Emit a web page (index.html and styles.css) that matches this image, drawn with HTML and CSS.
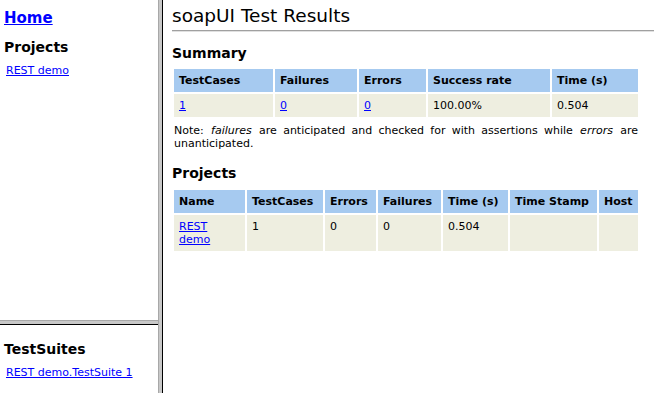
FILE: index.html
```html
<!DOCTYPE html>
<html lang="en">
<head>
    <meta charset="UTF-8">
    <title>soapUI Test Results</title>
    <link rel="stylesheet" href="styles.css">
</head>
<body>
    <div class="frames">
        <div class="side">
            <div class="side_top">
                <h2 class="home"><a href="#">Home</a></h2>
                <h3>Projects</h3>
                <ul class="links">
                    <li><a href="#">REST demo</a></li>
                </ul>
            </div>
            <div class="hsplit"></div>
            <div class="side_bottom">
                <h3>TestSuites</h3>
                <ul class="links">
                    <li><a href="#">REST demo.TestSuite 1</a></li>
                </ul>
            </div>
        </div>
        <div class="vsplit"></div>
        <div class="main">
            <h1>soapUI Test Results</h1>
            <hr>
            <h2>Summary</h2>
            <table class="details summary">
                <tr>
                    <th class="c1">TestCases</th>
                    <th class="c2">Failures</th>
                    <th class="c3">Errors</th>
                    <th class="c4">Success rate</th>
                    <th class="c5">Time (s)</th>
                </tr>
                <tr>
                    <td><a href="#">1</a></td>
                    <td><a href="#">0</a></td>
                    <td><a href="#">0</a></td>
                    <td>100.00%</td>
                    <td>0.504</td>
                </tr>
            </table>
            <p class="note">Note: <i>failures</i> are anticipated and checked for with assertions while <i>errors</i> are unanticipated.</p>
            <h2>Projects</h2>
            <table class="details projects">
                <tr>
                    <th class="p1">Name</th>
                    <th class="p2">TestCases</th>
                    <th class="p3">Errors</th>
                    <th class="p4">Failures</th>
                    <th class="p5">Time (s)</th>
                    <th class="p6">Time Stamp</th>
                    <th class="p7">Host</th>
                </tr>
                <tr>
                    <td><a href="#">REST demo</a></td>
                    <td>1</td>
                    <td>0</td>
                    <td>0</td>
                    <td>0.504</td>
                    <td></td>
                    <td></td>
                </tr>
            </table>
        </div>
    </div>
</body>
</html>
```

FILE: styles.css
```css
html, body {
    margin: 0;
    height: 100%;
}
body {
    font-family: "DejaVu Sans", Verdana, sans-serif;
    font-size: 11px;
    color: #000;
    background: #fff;
}
a {
    color: #0000ff;
}
.frames {
    display: flex;
    height: 393px;
    overflow: hidden;
}
.side {
    width: 158px;
    display: flex;
    flex-direction: column;
}
.side_top {
    height: 320px;
    padding: 0 4px;
}
.hsplit {
    height: 4px;
    background: #c8c8c8;
    border-top: 1px solid #a8a8a8;
    box-sizing: border-box;
}
.side_bottom {
    flex: 1;
    border-top: 1px solid #000;
    padding: 0 4px;
}
.vsplit {
    width: 4px;
    background: #c8c8c8;
    border-left: 1px solid #a8a8a8;
    box-sizing: border-box;
}
.main {
    flex: 1;
    border-left: 1px solid #000;
    padding: 0 0 0 9px;
}
h1 {
    font-size: 18.5px;
    font-weight: normal;
    margin: 5px 0 4px;
}
hr {
    border: 0;
    border-top: 1px solid #a0a0a0;
    border-bottom: 1px solid #e0e0e0;
    margin: 0;
}
h2 {
    font-size: 14px;
    font-weight: bold;
    margin: 13px 0 6px;
}
h3 {
    font-size: 14px;
    margin: 13px 0 8px;
}
.home {
    font-size: 15px;
    margin: 9px 0 0;
}
.side_top h3 {
    margin-top: 12px;
    margin-bottom: 9px;
}
.side_bottom h3 {
    margin-top: 16px;
    margin-bottom: 9px;
}
.links {
    list-style: none;
    margin: 0;
    padding: 0 0 0 2px;
}
table.details {
    border-spacing: 2px;
    table-layout: fixed;
    width: 468px;
}
table.details th,
table.details td {
    box-sizing: border-box;
    padding: 5px 5px;
    height: 23px;
    line-height: 13px;
}
table.details th {
    background: #a6caf0;
    text-align: left;
    font-weight: bold;
}
table.details td {
    background: #eeeee0;
    vertical-align: top;
}
.c1 { width: 99px; }
.c2 { width: 82px; }
.c3 { width: 67px; }
.c4 { width: 122px; }
.c5 { width: 86px; }
.projects td {
    height: 36px;
}
.p1 { width: 71px; }
.p2 { width: 76px; }
.p3 { width: 51px; }
.p4 { width: 63px; }
.p5 { width: 65px; }
.p6 { width: 87px; }
.p7 { width: 39px; }
.note {
    text-align: justify;
    margin: 5px 16px 15px 2px;
    line-height: 13px;
}
.note i {
    padding: 0 1px;
}
.note + h2 {
    margin-bottom: 7px;
}
```
